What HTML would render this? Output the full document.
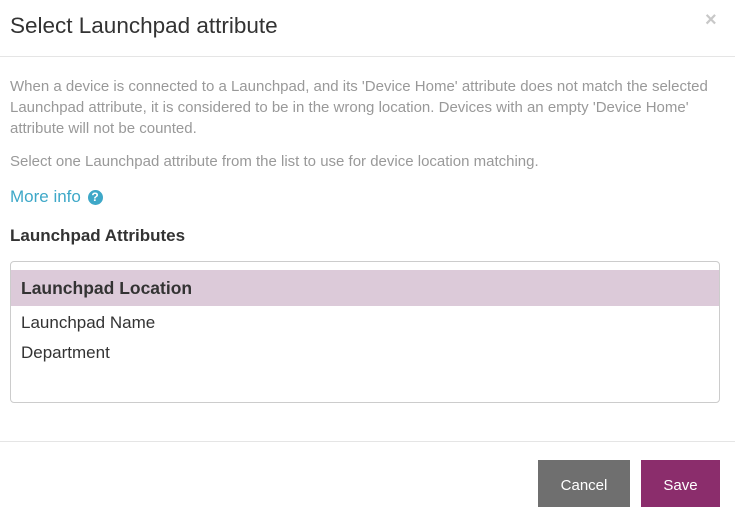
<!DOCTYPE html>
<html><head><meta charset="utf-8"><style>
*{box-sizing:border-box;margin:0;padding:0}
body{width:735px;height:516px;background:#fff;font-family:"Liberation Sans",Arial,sans-serif;position:relative;overflow:hidden;color:#333}
.title{position:absolute;left:10px;top:13px;font-size:22.5px;color:#333}
.close{position:absolute;left:705px;top:9px;font-size:20px;color:#c8c8c8;font-weight:bold}
.hr1{position:absolute;left:0;right:0;top:56px;border-top:1px solid #e5e5e5}
.p{position:absolute;left:10px;font-size:15px;color:#999;line-height:21px;width:715px}
.more{position:absolute;left:10px;top:187px;font-size:17px;color:#3ea8c8}
.q{display:inline-block;width:15px;height:15px;border-radius:50%;background:#3ea8c8;color:#fff;font-size:12px;font-weight:bold;text-align:center;line-height:15px;vertical-align:1px;margin-left:2px}
.h{position:absolute;left:10px;top:226px;font-size:17px;font-weight:bold;color:#333}
.list{position:absolute;left:10px;top:261px;width:710px;height:142px;border:1px solid #ccc;border-radius:4px;overflow:hidden}
.sel{position:absolute;left:0;top:8px;width:100%;height:36px;background:#dccad9;font-weight:bold;font-size:17.5px;line-height:36px;padding-left:10px}
.it{position:absolute;left:10px;font-size:17px;color:#333}
.hr2{position:absolute;left:0;right:0;top:441px;border-top:1px solid #e5e5e5}
.btn{position:absolute;top:460px;height:47px;color:#fff;font-size:15px;text-align:center;line-height:51px}
</style></head><body>
<div class="title">Select Launchpad attribute</div>
<div class="close">×</div>
<div class="hr1"></div>
<div class="p" style="top:76px">When a device is connected to a Launchpad, and its 'Device Home' attribute does not match the selected Launchpad attribute, it is considered to be in the wrong location. Devices with an empty 'Device Home' attribute will not be counted.</div>
<div class="p" style="top:151px">Select one Launchpad attribute from the list to use for device location matching.</div>
<div class="more">More info <span class="q">?</span></div>
<div class="h">Launchpad Attributes</div>
<div class="list">
<div class="sel">Launchpad Location</div>
<div class="it" style="top:51px">Launchpad Name</div>
<div class="it" style="top:81px">Department</div>
</div>
<div class="hr2"></div>
<div class="btn" style="left:538px;width:92px;background:#6f6f6f">Cancel</div>
<div class="btn" style="left:641px;width:79px;background:#8b2d6c">Save</div>
</body></html>
